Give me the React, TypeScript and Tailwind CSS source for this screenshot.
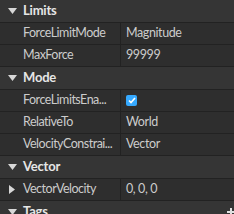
import React from "react";

const font = { fontFamily: 'Lato, "Noto Sans", sans-serif' };

function Header({ title, children }: { title: string; children?: React.ReactNode }) {
  return (
    <div className="relative flex h-[23px] items-center border-b border-[#222222] bg-[#353535]">
      <div className="flex w-[23px] justify-center pl-[1px]">
        <svg width="9" height="6" viewBox="0 0 9 6"><path d="M0 0H9L4.5 6Z" fill="#d8d8d8" /></svg>
      </div>
      <span className="text-[13px] font-bold tracking-[-0.2px] text-[#e6e6e6]">{title}</span>
      {children}
    </div>
  );
}

function Row({ name, value, arrow }: { name: string; value: React.ReactNode; arrow?: boolean }) {
  return (
    <div className="flex h-[22px] items-stretch border-b border-[#222222] bg-[#2e2e2e]">
      <div className="flex w-[120px] items-center overflow-hidden">
        <div className="flex w-[23px] shrink-0 justify-center">
          {arrow && <svg width="6" height="9" viewBox="0 0 6 9"><path d="M0 0V9L6 4.5Z" fill="#d8d8d8" /></svg>}
        </div>
        <span className="whitespace-nowrap text-[12.5px] tracking-[-0.5px] text-[#cccccc]">{name}</span>
      </div>
      <div className="flex flex-1 items-center border-l border-[#222222] pl-[5px] text-[12.5px] tracking-[-0.4px] text-[#cccccc]">{value}</div>
    </div>
  );
}

export default function App() {
  return (
    <div className="h-[214px] w-[234px] overflow-hidden bg-[#2e2e2e]" style={font}>
      <Header title="Limits" />
      <Row name="ForceLimitMode" value="Magnitude" />
      <Row name="MaxForce" value="99999" />
      <Header title="Mode" />
      <Row
        name="ForceLimitsEna..."
        value={
          <div className="flex h-[11px] w-[11px] items-center justify-center rounded-[2px] bg-[#35a9ff]">
            <svg width="8" height="7" viewBox="0 0 8 7"><path d="M1 3.5L3 5.5L7 1" stroke="white" strokeWidth="1.6" fill="none" /></svg>
          </div>
        }
      />
      <Row name="RelativeTo" value="World" />
      <Row name="VelocityConstrai..." value="Vector" />
      <Header title="Vector" />
      <Row name="VectorVelocity" value="0, 0, 0" arrow />
      <Header title="Tags">
        <svg className="absolute right-[-2px] top-[6px]" width="10" height="10" viewBox="0 0 10 10"><path d="M5 1V9M1 5H9" stroke="#e0e0e0" strokeWidth="2" /></svg>
      </Header>
    </div>
  );
}
